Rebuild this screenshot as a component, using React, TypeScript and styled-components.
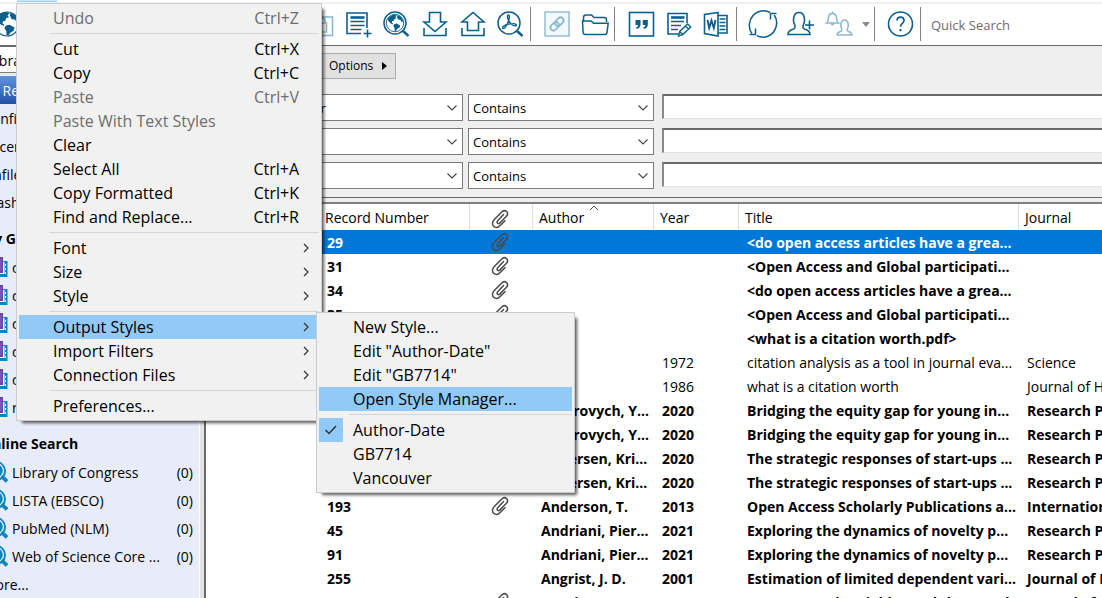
import React from 'react';
import styled, { createGlobalStyle } from 'styled-components';

const INK = '#0b5f8a';
const PALE = '#8db9cf';

const GlobalStyle = createGlobalStyle`
  * { box-sizing: border-box; }
  html, body { margin: 0; padding: 0; }
  body {
    overflow: hidden;
    background: #ffffff;
    color: #000000;
    font-family: 'Open Sans', 'Noto Sans', sans-serif;
    font-size: 14px;
    line-height: 20px;
  }
  button, input, select { font: inherit; color: inherit; margin: 0; }
`;

const Window = styled.div`
  height: 100vh;
  display: flex;
  flex-direction: column;
  overflow: hidden;
`;

const MenuBar = styled.nav`
  flex: none;
  height: 4px;
  display: flex;
  align-items: flex-end;
  overflow: hidden;
  border-bottom: 2px solid #f0f0f0;
`;

const MenuBarItem = styled.button<{ $open?: boolean; $width: number }>`
  flex: none;
  width: ${(p) => p.$width}px;
  height: 22px;
  padding: 0;
  border: 0;
  border-bottom: ${(p) => (p.$open ? '1px solid #99d1ff' : '0')};
  background: ${(p) => (p.$open ? '#cce8ff' : 'transparent')};
  font-size: 14px;
  line-height: 22px;
  white-space: nowrap;
`;

const Toolbar = styled.header`
  flex: none;
  height: 42px;
  display: flex;
  align-items: center;
  padding-bottom: 1px;
  border-bottom: 1px solid #696969;
  background: #ffffff;
`;

const ToolButton = styled.button<{ $width?: number }>`
  flex: none;
  width: ${(p) => p.$width ?? 38}px;
  height: 38px;
  padding: 0;
  border: 0;
  background: transparent;
  display: flex;
  align-items: center;
  justify-content: center;
`;

const WebButton = styled(ToolButton)`
  margin-left: -12px;
  margin-right: 276px;
`;

const ToolDivider = styled.span`
  flex: none;
  width: 1px;
  height: 34px;
  margin-right: 7px;
  background: #808080;
`;

const QuickSearch = styled.input`
  flex: 1;
  min-width: 0;
  height: 30px;
  padding: 2px 3px 0;
  border: 0;
  outline: 0;
  background: transparent;
  font-size: 13px;
  &::placeholder { color: #6d6d6d; opacity: 1; }
`;

const Body = styled.div`
  flex: 1;
  min-height: 0;
  display: flex;
`;

const Sidebar = styled.aside`
  flex: none;
  width: 199px;
  overflow: hidden;
  border-top: 1px solid #696969;
  background: #e8ecf9;
`;

const SidebarTitle = styled.div`
  height: 26px;
  margin-bottom: 3px;
  padding-top: 2px;
  border-bottom: 1px solid #808080;
  background: #ffffff;
  line-height: 24px;
  text-indent: -12px;
`;

const SidebarLink = styled.a<{ $selected?: boolean }>`
  display: block;
  height: 28px;
  padding-top: 1px;
  line-height: 28px;
  text-indent: -17px;
  white-space: nowrap;
  text-decoration: none;
  color: ${(p) => (p.$selected ? '#ffffff' : '#000000')};
  background: ${(p) => (p.$selected ? 'linear-gradient(#5f93de, #2451a8)' : 'transparent')};
`;

const SidebarHeading = styled.h2`
  height: 37px;
  margin: 0;
  padding-top: 9px;
  font-size: 14px;
  line-height: 28px;
  font-weight: 700;
  text-indent: -19px;
`;

const SidebarRow = styled.a`
  display: flex;
  align-items: center;
  gap: 4px;
  height: 28px;
  margin-left: -16px;
  padding-right: 6px;
  color: #000000;
  text-decoration: none;
  white-space: nowrap;
`;

const RowLabel = styled.span`
  flex: 1;
  padding-top: 2px;
`;

const RowCount = styled.span`
  padding-top: 2px;
`;

const Splitter = styled.div`
  flex: none;
  width: 7px;
  border-left: 1px solid #ffffff;
  border-right: 2px solid #6a6a6a;
  background: #e3e3e3;
`;

const Main = styled.main`
  flex: 1;
  min-width: 0;
  display: flex;
  flex-direction: column;
`;

const SearchPanel = styled.section`
  flex: none;
  height: 158px;
  padding-top: 7px;
  background: #efefef;
`;

const OptionsButton = styled.button`
  display: flex;
  align-items: center;
  gap: 9px;
  height: 26px;
  margin-left: 104px;
  padding: 0 8px 0 18px;
  border: 1px solid #adadad;
  background: #e1e1e1;
  font-size: 12px;
`;

const Filters = styled.div`
  display: flex;
  flex-direction: column;
  gap: 7px;
  margin-top: 15px;
  padding-left: 73px;
`;

const FilterRow = styled.div`
  display: flex;
`;

const SelectBox = styled.span<{ $width: number; $gap: number }>`
  flex: none;
  display: grid;
  align-items: center;
  width: ${(p) => p.$width}px;
  height: 27px;
  margin-right: ${(p) => p.$gap}px;
  & > * { grid-area: 1 / 1; }
  & > svg { justify-self: end; margin-right: 5px; pointer-events: none; }
`;

const Select = styled.select`
  appearance: none;
  width: 100%;
  height: 27px;
  padding: 1px 24px 0 4px;
  border: 1px solid #7a7a7a;
  border-radius: 0;
  background: #ffffff;
  font-size: 13px;
`;

const TermInput = styled.input`
  flex: 1;
  min-width: 0;
  height: 25px;
  padding: 0 4px;
  border: solid;
  border-width: 2px 0 1px 2px;
  border-color: #696969 #e3e3e3 #e3e3e3 #8a8a8a;
  border-radius: 0;
  background: #ffffff;
`;

const PaneBar = styled.div`
  flex: none;
  height: 7px;
  margin-top: -7px;
  border-top: 1px solid #696969;
  border-bottom: 2px solid #808080;
  background: #eeeeee;
`;

const TablePane = styled.div`
  flex: 1;
  min-height: 0;
  overflow: hidden;
`;

const Table = styled.table`
  width: 100%;
  table-layout: fixed;
  border-collapse: separate;
  border-spacing: 0;
`;

const HeadCell = styled.th<{ $rule?: boolean }>`
  position: relative;
  height: 26px;
  padding: 2px 0 0 6px;
  border-left: 1px solid ${(p) => (p.$rule ? '#e0e0e0' : 'transparent')};
  font-weight: 400;
  text-align: left;
  white-space: nowrap;
`;

const ClipHead = styled(HeadCell)`
  padding: 3px 2px 0 0;
  line-height: 0;
  text-align: center;
`;

const SortMark = styled.svg`
  position: absolute;
  top: 1px;
  left: 56px;
`;

const Row = styled.tr<{ $selected?: boolean; $read?: boolean }>`
  font-weight: ${(p) => (p.$read ? 400 : 700)};
  color: ${(p) => (p.$selected ? '#ffffff' : '#000000')};
  background: ${(p) => (p.$selected ? '#0078d7' : '#ffffff')};
`;

const Cell = styled.td`
  height: 24px;
  padding: 2px 0 0 9px;
  overflow: hidden;
  white-space: nowrap;
  line-height: 22px;
`;

const ClipCell = styled(Cell)`
  padding: 0 1px 0 0;
  line-height: 0;
  text-align: center;
`;

const Menu = styled.ul`
  position: absolute;
  z-index: 2;
  margin: 0;
  padding: 2px;
  list-style: none;
  border: 1px solid #cccccc;
  background: #f1f1f1;
  box-shadow: 4px 4px 3px -2px rgba(0, 0, 0, 0.65);
  font-family: 'Open Sans', 'Noto Sans', sans-serif;
  font-size: 15px;
`;

const EditMenu = styled(Menu)`
  top: 3px;
  left: 16px;
  width: 306px;
  font-size: 16px;
`;

const SubMenu = styled(Menu)`
  top: -3px;
  left: 297px;
  width: 259px;
  font-size: 16px;
`;

const MenuEntry = styled.li`
  position: relative;
`;

const MenuRule = styled.li`
  height: 7px;
  margin-left: 30px;
  padding-top: 3px;
  &::before { content: ''; display: block; height: 1px; background: #d4d4d4; }
`;

const MenuButton = styled.button<{ $active?: boolean; $submenu?: boolean }>`
  display: flex;
  align-items: center;
  width: 100%;
  height: 24px;
  padding: 0 ${(p) => (p.$submenu ? 10 : 20)}px 0 0;
  border: 0;
  background: ${(p) => (p.$active ? '#91c9f7' : 'transparent')};
  text-align: left;
  white-space: nowrap;
  &:disabled { color: #6d6d6d; }
`;

const MenuMark = styled.span<{ $on?: boolean }>`
  flex: none;
  display: flex;
  align-items: center;
  justify-content: center;
  width: 24px;
  height: 24px;
  margin-right: 10px;
  background: ${(p) => (p.$on ? '#91c9f7' : 'transparent')};
`;

const MenuLabel = styled.span`
  flex: 1;
`;

type IconProps = { color?: string; children: React.ReactNode };

const Icon = ({ color = INK, children }: IconProps) => (
  <svg width="32" height="32" viewBox="0 0 32 32" fill="none" stroke={color} strokeWidth="1.600" aria-hidden="true">
    {children}
  </svg>
);

const Continents = () => (
  <g fill={INK} stroke="none">
    <path d="M-8.5-4C-7-7-3.500-9.500 0-9.300l2 1.100-1.600 1.400 1.200 1.600-2.200.6-.6 1.800-2 .8-.4 1.600 1.500 1-.5 1-2.600-1.400-2.400-2.400z" />
    <path d="M2.500-8.800C6-8 9-5 9.300-1.600L7.600-1 6.400-3.300 3.600-4 2.300-6.400z" />
    <path d="M-.8 1.200 2.200.6 6 3 5 5.400 2.800 6.600 1 9.200-.4 8.800-.6 5.400-2 3.400z" />
  </g>
);

const LibraryGlobe = () => (
  <Icon>
    <circle cx="16" cy="16" r="12" strokeWidth="1.200" />
    <g transform="translate(16 16) scale(1.28)">
      <Continents />
    </g>
  </Icon>
);

const LockIcon = () => (
  <Icon color={PALE}>
    <rect x="4" y="9" width="23.500" height="18.500" />
    <path d="M15 15v-2.500c0-3 5-3 5 0V15M13.500 15h8v9h-8z" />
  </Icon>
);

const NewReferenceIcon = () => (
  <Icon>
    <path d="M24 20V5H4v20.500h14" />
    <path d="M7.500 9.500h14" strokeWidth="2.600" />
    <path d="M7.500 13.500h14M7.500 17.500h14M7.500 21.500h11" strokeWidth="1.400" />
    <path d="M24.500 21.500v8M20.500 25.500h8" />
  </Icon>
);

const OnlineSearchIcon = () => (
  <Icon>
    <circle cx="14" cy="15" r="11" strokeWidth="1.500" />
    <circle cx="14" cy="15" r="8.700" strokeWidth="0.900" />
    <g transform="translate(14 15) scale(0.880)">
      <Continents />
    </g>
    <path d="M21.500 22.500l6 5.500" strokeWidth="2.400" />
  </Icon>
);

const ImportIcon = () => (
  <Icon>
    <path d="M10.500 4.500h11V14h5.500L16 23.500 5 14h5.500zM5 20v7.500h22V20" />
  </Icon>
);

const ExportIcon = () => (
  <Icon>
    <path d="M10.500 22.500h11V14H27L16 4.500 5 14h5.500zM5 20v7.500h22V20" />
  </Icon>
);

const FindPdfIcon = () => (
  <Icon>
    <circle cx="14" cy="15" r="11" strokeWidth="1.500" />
    <path d="M21.500 22.500l6 5.500" strokeWidth="2.400" />
    <path
      d="M13.500 7c-1.600 0-1.200 3 .4 5.800 1.600 3 4.600 5.400 6.700 5 1.600-.6.600-2.400-3-2.200-3.600.1-7 1-9.200 2.700-1.800 1.500-.8 3 .9 1.900 2.200-1.600 4.600-7.200 5-10.600.2-1.700-.2-2.600-.8-2.600z"
      strokeWidth="1.400"
    />
  </Icon>
);

const LinkIcon = () => (
  <Icon color={PALE}>
    <rect x="4" y="4" width="24" height="24" fill="#f3f8fb" strokeWidth="1.400" />
    <g transform="rotate(-45 16 16)" strokeWidth="1.800">
      <rect x="8" y="13" width="9.500" height="6" rx="3" />
      <rect x="14.500" y="13" width="9.500" height="6" rx="3" />
    </g>
  </Icon>
);

const FolderIcon = () => (
  <Icon>
    <path d="M4.500 13.500V9.500c0-1.500 1-2.500 2.500-2.500h5.500l2.500 2.500h10c1.500 0 2.500 1 2.500 2.500v2" strokeWidth="1.500" />
    <path d="M3.500 13h8.800l2.200 2.300h14.700l-1.200 9c-.2 1.400-1 2.200-2.500 2.200h-19c-1.500 0-2.300-.8-2.400-2.200z" strokeWidth="1.500" />
  </Icon>
);

const CitationIcon = () => (
  <Icon>
    <rect x="4.500" y="4.500" width="24" height="23.500" />
    <g fill={INK} stroke="none">
      <path d="M10.500 12h5v4.500c0 2.500-1.500 4.300-4.200 4.500v-1.600c1.200-.3 1.700-1.100 1.700-2.400h-2.500z" />
      <path d="M17.800 12h5v4.500c0 2.500-1.500 4.300-4.200 4.500v-1.600c1.200-.3 1.700-1.100 1.700-2.400h-2.500z" />
    </g>
  </Icon>
);

const EditReferenceIcon = () => (
  <Icon>
    <path d="M24 15V5.500H5V26h10.500" />
    <path d="M8 9.500h13.500" strokeWidth="2.600" />
    <path d="M8 13.500h13M8 17.500h10M8 21.500h7" strokeWidth="1.400" />
    <path d="M15.500 28l1.200-4.600 8-7.400 3 3-8 7.600zM22.500 18l3 3M16.700 23.400l2.800 3" strokeWidth="1.400" />
  </Icon>
);

const WordIcon = () => (
  <Icon>
    <path d="M17 4.500L3.500 6.500v19L17 28zM17 7.500h9V25h-9" />
    <path d="M6.500 12l1.700 8 2.300-7.500 2.300 7.500 1.700-8" strokeWidth="1.900" />
    <path d="M18.500 11h6M18.500 14.500h6M18.500 18h6M18.500 21.500h6" strokeWidth="1.400" />
  </Icon>
);

const SyncIcon = () => (
  <Icon>
    <path d="M4.800 25.500C0 18.500 2.500 7.500 11.500 3.800c4.500-1.700 8.500-1 11.500.7M27.200 7C32 13.500 29.500 24 21.500 28c-4.500 2-8.500 1.300-11.700-.3" strokeWidth="1.500" />
    <path d="M29.500 5.500h-6v6M2.500 26.500h6v-6" strokeWidth="1.500" />
  </Icon>
);

const person =
  'M9.500 16.500C7.500 13 8 4.500 14 4.500s6.500 8.500 4.500 12c-1.300 2.500-.5 4 1.500 4.700 3 .9 5 2 5 5.300H3c0-3.300 2-4.400 5-5.300 2-.7 2.800-2.200 1.500-4.700z';

const AddUserIcon = () => (
  <Icon>
    <path d={person} />
    <path d="M24.500 12.500v9M20 17h9" />
  </Icon>
);

const AlertUserIcon = () => (
  <Icon color={PALE}>
    <path d="M3.500 15h12c-1.500-1.200-2-2.400-2-5 0-3-1.500-4.500-4-4.500s-4 1.500-4 4.500c0 2.600-.5 3.800-2 5zM9.500 5.500v-2M8 16.500h3" />
    <g transform="translate(12 9) scale(0.680)" strokeWidth="2.300">
      <path d={person} />
    </g>
  </Icon>
);

const HelpIcon = () => (
  <Icon>
    <circle cx="15.500" cy="16" r="12" />
    <path d="M12 12.500c0-4.500 7-4.500 7 0 0 3-3.500 3-3.500 6.300" strokeWidth="1.700" />
    <path d="M15.500 21v2.200" strokeWidth="2" />
  </Icon>
);

const PaperClip = () => (
  <svg width="18" height="20" viewBox="0 0 18 20" fill="none" stroke="#4a4a4a" strokeWidth="1.500" strokeLinecap="round" aria-hidden="true">
    <path d="M12.500 5.500l-5.700 6.200c-1.800 2 .4 4 2.200 2.200l6.200-6.400c3.500-3.800-1-8-4.700-4.300L3.300 10.600c-5 5.200 1.200 10.600 5.900 5.800l4.800-4.700" />
  </svg>
);

const Chevron = () => (
  <svg width="12" height="8" viewBox="0 0 12 8" fill="none" stroke="#444444" strokeWidth="1.100" aria-hidden="true">
    <path d="M1.500 1.500L6 6l4.500-4.500" />
  </svg>
);

const SubmenuArrow = () => (
  <svg width="6" height="10" viewBox="0 0 6 10" fill="none" stroke="#333333" strokeWidth="1.200" aria-hidden="true">
    <path d="M1 1l4 4-4 4" />
  </svg>
);

const CheckMark = () => (
  <svg width="14" height="12" viewBox="0 0 14 12" fill="none" stroke="#333333" strokeWidth="1.500" aria-hidden="true">
    <path d="M1.500 6l3.500 3.500 7-7.500" />
  </svg>
);

const GroupIcon = () => (
  <svg width="24" height="22" viewBox="0 0 24 22" aria-hidden="true">
    <path d="M8 5h15.500v16H8z" fill="#0a86bd" />
    <path d="M8 6h12.500v12H8z" fill="#ffffff" />
    <path d="M21.500 8v2M21.500 12v2M21.500 16v2" stroke="#ffffff" />
    <path d="M2 1h17v16H2z" fill="#6a3fae" />
    <path d="M17 3v12" stroke="#8a68c4" />
  </svg>
);

const OnlineIcon = () => (
  <svg width="24" height="22" viewBox="0 0 24 22" fill="none" stroke="#0a86bd" aria-hidden="true">
    <circle cx="12" cy="10" r="9" strokeWidth="2" fill="#ffffff" />
    <path d="M10 3.500c5-1 9 2 8.500 7-.3 2.500-1.500 4-3.500 5l1-4-2-3z" fill="#0a86bd" strokeWidth="0.500" />
    <path d="M17.500 15l5.500 5.500" strokeWidth="3.800" />
  </svg>
);

const libraryLinks = ['All Refs', 'Configure', 'Recent', 'Unfiled', 'Trash'];
const groups = ['citation', 'culture', 'career', 'cluster', 'course', 'result'];
const onlineSources = ['Library of Congress', 'LISTA (EBSCO)', 'PubMed (NLM)', 'Web of Science Core ...'];
const filterFields = ['Author', 'Year', 'Title'];

type Reference = {
  record: string;
  clip?: boolean;
  author?: string;
  year?: string;
  title: string;
  journal?: string;
  read?: boolean;
};

const references: Reference[] = [
  { record: '29', clip: true, title: '<do open access articles have a grea...' },
  { record: '31', clip: true, title: '<Open Access and Global participati...' },
  { record: '34', clip: true, title: '<do open access articles have a grea...' },
  { record: '35', clip: true, title: '<Open Access and Global participati...' },
  { record: '36', clip: true, title: '<what is a citation worth.pdf>' },
  { record: '32', year: '1972', title: 'citation analysis as a tool in journal eva...', journal: 'Science', read: true },
  { record: '33', year: '1986', title: 'what is a citation worth', journal: 'Journal of Human Resources', read: true },
  { record: '40', author: 'Ambrovych, Y...', year: '2020', title: 'Bridging the equity gap for young in...', journal: 'Research Policy' },
  { record: '86', author: 'Ambrovych, Y...', year: '2020', title: 'Bridging the equity gap for young in...', journal: 'Research Policy' },
  { record: '41', author: 'Andersen, Kri...', year: '2020', title: 'The strategic responses of start-ups ...', journal: 'Research Policy' },
  { record: '87', author: 'Andersen, Kri...', year: '2020', title: 'The strategic responses of start-ups ...', journal: 'Research Policy' },
  { record: '193', clip: true, author: 'Anderson, T.', year: '2013', title: 'Open Access Scholarly Publications a...', journal: 'International Journal' },
  { record: '45', author: 'Andriani, Pier...', year: '2021', title: 'Exploring the dynamics of novelty p...', journal: 'Research Policy' },
  { record: '91', author: 'Andriani, Pier...', year: '2021', title: 'Exploring the dynamics of novelty p...', journal: 'Research Policy' },
  { record: '255', author: 'Angrist, J. D.', year: '2001', title: 'Estimation of limited dependent vari...', journal: 'Journal of Business' },
  { record: '256', clip: true, author: 'Angrist, J. D.', year: '2001', title: 'Instrumental variables and the search...', journal: 'Journal of Economics' },
];

type ItemProps = {
  label: string;
  keys?: string;
  disabled?: boolean;
  active?: boolean;
  checked?: boolean;
  submenu?: boolean;
  children?: React.ReactNode;
};

const MenuItem = ({ label, keys, disabled, active, checked, submenu, children }: ItemProps) => (
  <MenuEntry role="none">
    <MenuButton role="menuitem" disabled={disabled} $active={active} $submenu={submenu}>
      <MenuMark $on={checked}>{checked && <CheckMark />}</MenuMark>
      <MenuLabel>{label}</MenuLabel>
      {keys && <span>{keys}</span>}
      {submenu && <SubmenuArrow />}
    </MenuButton>
    {children}
  </MenuEntry>
);

export default function App() {
  return (
    <>
      <GlobalStyle />
      <Window>
        <MenuBar>
          <MenuBarItem $width={17} aria-label="File" />
          <MenuBarItem $width={40} $open>Edit</MenuBarItem>
          <MenuBarItem $width={90}>References</MenuBarItem>
          <MenuBarItem $width={63}>Groups</MenuBarItem>
          <MenuBarItem $width={50}>Tools</MenuBarItem>
          <MenuBarItem $width={90}>Window</MenuBarItem>
          <MenuBarItem $width={44}>Help</MenuBarItem>
        </MenuBar>

        <Toolbar>
          <WebButton aria-label="Online library"><LibraryGlobe /></WebButton>
          <ToolButton aria-label="Locked"><LockIcon /></ToolButton>
          <ToolButton aria-label="New reference"><NewReferenceIcon /></ToolButton>
          <ToolButton aria-label="Online search"><OnlineSearchIcon /></ToolButton>
          <ToolButton aria-label="Import"><ImportIcon /></ToolButton>
          <ToolButton aria-label="Export"><ExportIcon /></ToolButton>
          <ToolButton aria-label="Find full text"><FindPdfIcon /></ToolButton>
          <ToolDivider />
          <ToolButton aria-label="Open link"><LinkIcon /></ToolButton>
          <ToolButton aria-label="Open file"><FolderIcon /></ToolButton>
          <ToolDivider />
          <ToolButton aria-label="Insert citation"><CitationIcon /></ToolButton>
          <ToolButton aria-label="Format bibliography"><EditReferenceIcon /></ToolButton>
          <ToolButton aria-label="Return to word processor"><WordIcon /></ToolButton>
          <ToolDivider />
          <ToolButton aria-label="Sync library"><SyncIcon /></ToolButton>
          <ToolButton aria-label="Share library"><AddUserIcon /></ToolButton>
          <ToolButton aria-label="Activity feed"><AlertUserIcon /></ToolButton>
          <ToolButton aria-label="Activity options" $width={16}>
            <svg width="8" height="5" viewBox="0 0 8 5" aria-hidden="true"><path d="M0 0h8L4 5z" fill="#8a8a8a" /></svg>
          </ToolButton>
          <ToolDivider />
          <ToolButton aria-label="Help"><HelpIcon /></ToolButton>
          <ToolDivider />
          <QuickSearch type="text" placeholder="Quick Search" aria-label="Quick Search" />
        </Toolbar>

        <Body>
          <Sidebar>
            <SidebarTitle>Library</SidebarTitle>
            {libraryLinks.map((name, i) => (
              <SidebarLink key={name} href="#" $selected={i === 0}>{name}</SidebarLink>
            ))}
            <SidebarHeading>My Groups</SidebarHeading>
            {groups.map((name) => (
              <SidebarRow key={name} href="#"><GroupIcon /><RowLabel>{name}</RowLabel></SidebarRow>
            ))}
            <SidebarHeading>Online Search</SidebarHeading>
            {onlineSources.map((name) => (
              <SidebarRow key={name} href="#"><OnlineIcon /><RowLabel>{name}</RowLabel><RowCount>(0)</RowCount></SidebarRow>
            ))}
            <SidebarLink href="#">More...</SidebarLink>
          </Sidebar>
          <Splitter />

          <Main>
            <SearchPanel>
              <OptionsButton>
                Options
                <svg width="5" height="8" viewBox="0 0 5 8" aria-hidden="true"><path d="M0 0l5 4-5 4z" /></svg>
              </OptionsButton>
              <Filters>
                {filterFields.map((field) => (
                  <FilterRow key={field}>
                    <SelectBox $width={184} $gap={5}>
                      <Select aria-label={`Field ${field}`} defaultValue={field}><option>{field}</option></Select>
                      <Chevron />
                    </SelectBox>
                    <SelectBox $width={186} $gap={8}>
                      <Select aria-label={`${field} match`}><option>Contains</option></Select>
                      <Chevron />
                    </SelectBox>
                    <TermInput type="text" aria-label={`${field} term`} />
                  </FilterRow>
                ))}
              </Filters>
            </SearchPanel>
            <PaneBar />
            <TablePane>
              <Table>
                <colgroup>
                  <col style={{ width: 112 }} />
                  <col style={{ width: 151 }} />
                  <col style={{ width: 63 }} />
                  <col style={{ width: 121 }} />
                  <col style={{ width: 85 }} />
                  <col style={{ width: 280 }} />
                  <col />
                </colgroup>
                <thead>
                  <tr>
                    <HeadCell />
                    <HeadCell>Record Number</HeadCell>
                    <ClipHead $rule aria-label="Attachment"><PaperClip /></ClipHead>
                    <HeadCell $rule>
                      Author
                      <SortMark width="10" height="6" viewBox="0 0 10 6" fill="none" stroke="#555555">
                        <path d="M1 5l4-4 4 4" />
                      </SortMark>
                    </HeadCell>
                    <HeadCell $rule>Year</HeadCell>
                    <HeadCell $rule>Title</HeadCell>
                    <HeadCell $rule>Journal</HeadCell>
                  </tr>
                </thead>
                <tbody>
                  {references.map((r, i) => (
                    <Row key={r.record} $selected={i === 0} $read={r.read}>
                      <Cell />
                      <Cell>{r.record}</Cell>
                      <ClipCell>{r.clip && <PaperClip />}</ClipCell>
                      <Cell>{r.author}</Cell>
                      <Cell>{r.year}</Cell>
                      <Cell>{r.title}</Cell>
                      <Cell>{r.journal}</Cell>
                    </Row>
                  ))}
                </tbody>
              </Table>
            </TablePane>
          </Main>
        </Body>
      </Window>

      <EditMenu role="menu" aria-label="Edit">
        <MenuItem label="Undo" keys="Ctrl+Z" disabled />
        <MenuRule role="separator" />
        <MenuItem label="Cut" keys="Ctrl+X" />
        <MenuItem label="Copy" keys="Ctrl+C" />
        <MenuItem label="Paste" keys="Ctrl+V" disabled />
        <MenuItem label="Paste With Text Styles" disabled />
        <MenuItem label="Clear" />
        <MenuItem label="Select All" keys="Ctrl+A" />
        <MenuItem label="Copy Formatted" keys="Ctrl+K" />
        <MenuItem label="Find and Replace..." keys="Ctrl+R" />
        <MenuRule role="separator" />
        <MenuItem label="Font" submenu />
        <MenuItem label="Size" submenu />
        <MenuItem label="Style" submenu />
        <MenuRule role="separator" />
        <MenuItem label="Output Styles" submenu active>
          <SubMenu role="menu" aria-label="Output Styles">
            <MenuItem label="New Style..." />
            <MenuItem label={'Edit "Author-Date"'} />
            <MenuItem label={'Edit "GB7714"'} />
            <MenuItem label="Open Style Manager..." active />
            <MenuRule role="separator" />
            <MenuItem label="Author-Date" checked />
            <MenuItem label="GB7714" />
            <MenuItem label="Vancouver" />
          </SubMenu>
        </MenuItem>
        <MenuItem label="Import Filters" submenu />
        <MenuItem label="Connection Files" submenu />
        <MenuRule role="separator" />
        <MenuItem label="Preferences..." />
      </EditMenu>
    </>
  );
}
